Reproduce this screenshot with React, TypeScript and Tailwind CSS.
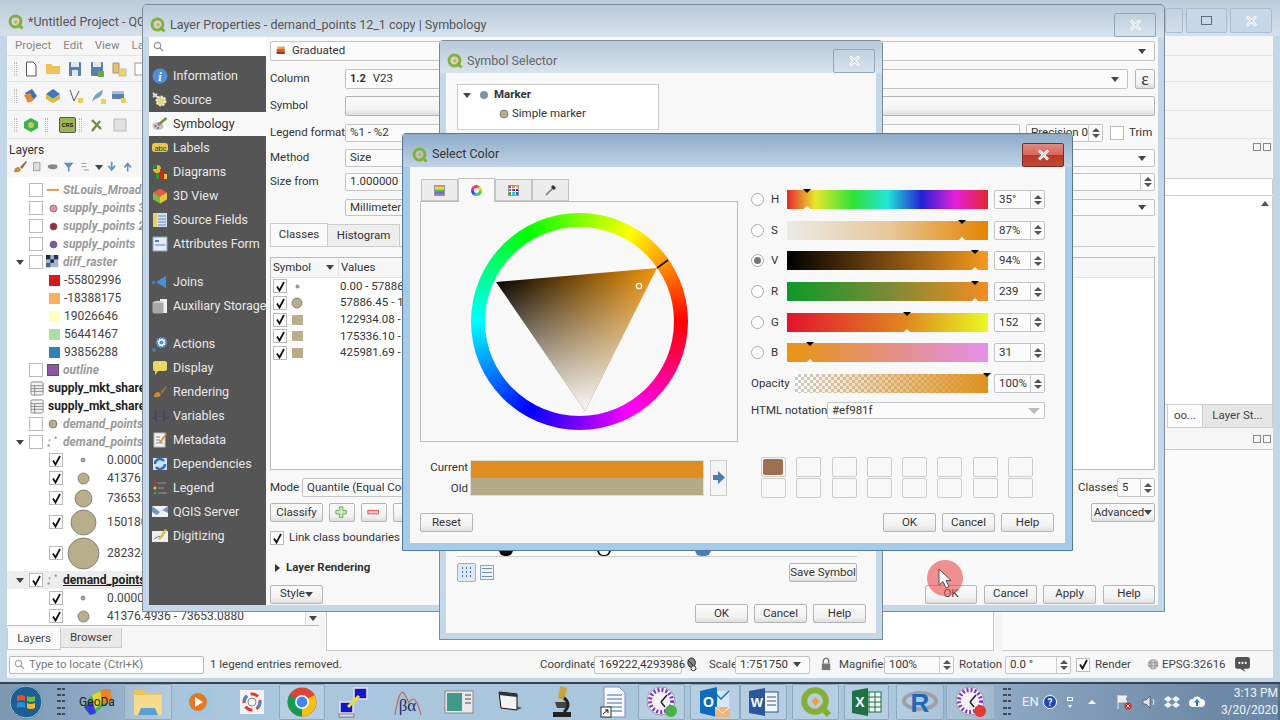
import type { ReactNode } from "react"

type Kids = { children?: ReactNode; className?: string }

const Arrow = ({ className = "" }: { className?: string }) => (
  <span className={`h-0 w-0 shrink-0 border-x-[4px] border-t-[5px] border-x-transparent border-t-[#444] ${className}`} />
)

function Btn({ children, className = "" }: Kids) {
  return (
    <div className={`flex h-[19px] items-center justify-center whitespace-nowrap rounded-[2px] border border-[#b4b4b4] bg-[linear-gradient(#fafafa,#f2f2f2_70%,#dedede)] text-[11.5px] text-[#333] ${className}`}>
      {children}
    </div>
  )
}

function Field({ children, className = "" }: Kids) {
  return (
    <div className={`flex items-center whitespace-nowrap rounded-[2px] border border-[#c4c4c4] bg-[#fbfbfb] pl-1 text-[11.5px] text-[#333] ${className}`}>
      {children}
    </div>
  )
}

function Combo({ children, className = "", faded = false }: Kids & { faded?: boolean }) {
  return (
    <Field className={`justify-between pr-2 ${className}`}>
      <span className="truncate">{children}</span>
      <Arrow className={faded ? "opacity-50" : ""} />
    </Field>
  )
}

function Spin({ children, className = "" }: Kids) {
  return (
    <Field className={`justify-between ${className}`}>
      <span className="truncate">{children}</span>
      <span className="flex h-full w-[14px] shrink-0 flex-col items-center justify-center gap-[2px] border-l border-[#ccc]">
        <span className="h-0 w-0 border-x-[4px] border-b-[4px] border-x-transparent border-b-[#555]" />
        <span className="h-0 w-0 border-x-[4px] border-t-[4px] border-x-transparent border-t-[#555]" />
      </span>
    </Field>
  )
}

function Check({ on = true, className = "" }: { on?: boolean; className?: string }) {
  return (
    <span className={`flex h-[14px] w-[14px] shrink-0 items-center justify-center border border-[#bbb] bg-white ${className}`}>
      {on && (
        <svg width="11" height="11" viewBox="0 0 11 11">
          <path d="M2 5.5 L4.5 9.5 L9 1" fill="none" stroke="#111" strokeWidth="1.8" />
        </svg>
      )}
    </span>
  )
}

const Ico = ({ s = 16, children }: { s?: number; children?: ReactNode }) => (
  <svg width={s} height={s} viewBox="0 0 16 16" className="shrink-0">
    {children}
  </svg>
)

const QLogo = ({ s = 16 }: { s?: number }) => (
  <Ico s={s}>
    <circle cx="7.5" cy="7.5" r="5.4" fill="none" stroke="#84b135" strokeWidth="3" />
    <path d="M10 10 L14.5 14.5" stroke="#84b135" strokeWidth="3" />
    <rect x="6.3" y="6.3" width="3" height="3" fill="#ee9f3e" transform="rotate(45 7.8 7.8)" />
  </Ico>
)

const Brush = () => (
  <Ico>
    <path d="M2 13 Q2 8 7 8 L9 11 Q7 14 2 13Z" fill="#c98b3c" />
    <path d="M8 8 L14 2 L15 3 L10 10Z" fill="#8d6f4b" />
  </Ico>
)

const navIcons: Record<string, ReactNode> = {
  info: (
    <Ico>
      <circle cx="8" cy="8" r="7.5" fill="#4f8fdb" />
      <text x="8" y="12.5" fontSize="12" fontWeight="700" fontStyle="italic" textAnchor="middle" fill="#fff" fontFamily="Liberation Serif, serif">i</text>
    </Ico>
  ),
  source: (
    <Ico>
      <circle cx="9" cy="9" r="4.5" fill="#e9d77e" stroke="#eee" strokeWidth="2" strokeDasharray="2 1.4" />
      <path d="M1 1 L6 6 M1 5 L5 2" stroke="#ddd" strokeWidth="2" />
    </Ico>
  ),
  symb: (
    <Ico>
      <ellipse cx="6" cy="10" rx="5.5" ry="4" fill="#c8c0cc" />
      <circle cx="3.5" cy="10" r="1" fill="#d33" />
      <circle cx="6" cy="12" r="1" fill="#38b" />
      <path d="M6 9 L14.5 2" stroke="#7a8f42" strokeWidth="2.6" />
    </Ico>
  ),
  labels: (
    <Ico>
      <rect x="0" y="3" width="16" height="9" rx="3" fill="#e7c84e" />
      <text x="8.5" y="10.5" fontSize="7.5" textAnchor="middle" fill="#333" fontFamily="Liberation Sans, sans-serif">abc</text>
    </Ico>
  ),
  diagrams: (
    <Ico>
      <circle cx="5" cy="5" r="4" fill="#e9b93a" />
      <path d="M5 5 L5 1 A4 4 0 0 0 1 5Z" fill="#2a7b32" />
      <rect x="4" y="9" width="3" height="6" fill="#2a9b3a" />
      <rect x="8" y="5" width="3" height="10" fill="#c92a2a" />
      <rect x="12" y="10" width="3" height="5" fill="#e8c23a" />
    </Ico>
  ),
  view3d: (
    <Ico>
      <path d="M8 0.5 L15 4.5 L8 8.5 L1 4.5Z" fill="#e8584f" />
      <path d="M1 4.5 L8 8.5 V15.5 L1 11.5Z" fill="#7dbb3c" />
      <path d="M15 4.5 L8 8.5 V15.5 L15 11.5Z" fill="#ecc43b" />
    </Ico>
  ),
  fields: (
    <Ico>
      <rect x="1" y="1" width="4" height="14" fill="#e9cf63" />
      <rect x="5" y="1" width="10" height="14" fill="#cfe0f2" />
      <path d="M6 4 H14 M6 7 H14 M6 10 H14 M6 13 H14" stroke="#6b8fb5" />
    </Ico>
  ),
  form: (
    <Ico>
      <rect x="1" y="1" width="14" height="14" fill="#e4ecf5" stroke="#8aa5c4" />
      <rect x="3" y="4" width="4" height="2" fill="#4f7fb5" />
      <rect x="3" y="8" width="10" height="2" fill="#9ab7d6" />
    </Ico>
  ),
  joins: (
    <Ico>
      <rect x="0" y="7" width="3" height="3" fill="#3f7fc4" />
      <path d="M4 8 L14 2 V14Z" fill="#4b8fd6" />
    </Ico>
  ),
  aux: (
    <Ico>
      <rect x="8" y="1" width="7" height="14" fill="#eee" />
      <ellipse cx="6" cy="5" rx="5.5" ry="2.2" fill="#ccc" />
      <rect x="0.5" y="5" width="11" height="9" fill="#a9a9a9" />
      <ellipse cx="6" cy="14" rx="5.5" ry="1.6" fill="#a9a9a9" />
    </Ico>
  ),
  actions: (
    <Ico>
      <circle cx="9.5" cy="6.5" r="4.6" fill="#fff" stroke="#4f8fdb" strokeWidth="2.4" strokeDasharray="2.2 1" />
      <circle cx="9.5" cy="6.5" r="2" fill="#4f8fdb" />
      <circle cx="2" cy="14" r="2" fill="#5277a8" />
    </Ico>
  ),
  display: (
    <Ico>
      <path d="M1 3 Q1 1 3 1 H13 Q15 1 15 3 V9 Q15 11 13 11 H6 L3 15 V11 Q1 11 1 9Z" fill="#e8d765" />
    </Ico>
  ),
  rendering: <Brush />,
  variables: (
    <Ico>
      <path d="M5 2 Q2 3 4 7 Q5 9 2 10 Q5 11 4 14 M11 2 Q14 3 12 7 Q11 9 14 10 Q11 11 12 14" fill="none" stroke="#4d3f6b" strokeWidth="1.6" />
    </Ico>
  ),
  metadata: (
    <Ico>
      <rect x="2" y="1" width="11" height="14" fill="#f4f4f4" stroke="#bbb" />
      <path d="M4 5 H8 M4 8 H8 M4 11 H11" stroke="#888" />
      <path d="M7 10 L14 1 L15 2 L9 11Z" fill="#e08a3a" />
    </Ico>
  ),
  deps: (
    <Ico>
      <rect x="1" y="2" width="14" height="12" fill="#cfe0f2" />
      <path d="M3 8 A5 5 0 0 1 12 5 M13 8 A5 5 0 0 1 4 11" fill="none" stroke="#2b6fc4" strokeWidth="2.4" />
    </Ico>
  ),
  legend: (
    <Ico>
      <circle cx="3" cy="3" r="1.6" fill="#c33" />
      <circle cx="3" cy="8" r="1.6" fill="#dcb93a" />
      <circle cx="3" cy="13" r="1.6" fill="#3a9b3a" />
      <path d="M6 3 H14 M6 8 H12 M6 13 H15" stroke="#999" />
    </Ico>
  ),
  server: (
    <Ico>
      <rect x="0" y="2" width="16" height="11" fill="#eef2f8" />
      <path d="M0 2 L8 8 L16 2 V9 L10 6 L5 11 L0 8Z" fill="#6e92c4" />
    </Ico>
  ),
  digit: (
    <Ico>
      <rect x="0" y="3" width="16" height="11" fill="#eeeeee" />
      <path d="M2 11 L7 8 L9 10 L14 3" fill="none" stroke="#777" />
      <path d="M6 11 L13 1 L15 2 L8 12Z" fill="#d8c44a" />
    </Ico>
  ),
}

type NavRow = { label: string; icon: string; sel?: boolean; gap?: boolean }
const nav: NavRow[] = [
  { label: "Information", icon: "info" },
  { label: "Source", icon: "source" },
  { label: "Symbology", icon: "symb", sel: true },
  { label: "Labels", icon: "labels" },
  { label: "Diagrams", icon: "diagrams" },
  { label: "3D View", icon: "view3d" },
  { label: "Source Fields", icon: "fields" },
  { label: "Attributes Form", icon: "form" },
  { label: "Joins", icon: "joins", gap: true },
  { label: "Auxiliary Storage", icon: "aux" },
  { label: "Actions", icon: "actions", gap: true },
  { label: "Display", icon: "display" },
  { label: "Rendering", icon: "rendering" },
  { label: "Variables", icon: "variables" },
  { label: "Metadata", icon: "metadata" },
  { label: "Dependencies", icon: "deps" },
  { label: "Legend", icon: "legend" },
  { label: "QGIS Server", icon: "server" },
  { label: "Digitizing", icon: "digit" },
]

const Dot = ({ d, c = "#b9ae8a" }: { d: number; c?: string }) => (
  <svg width={d + 2} height={d + 2} className="shrink-0">
    <circle cx={d / 2 + 1} cy={d / 2 + 1} r={d / 2} fill={c} stroke="#666" strokeWidth="0.7" />
  </svg>
)

const Dots = () => (
  <Ico s={14}>
    <circle cx="3" cy="12" r="1.4" fill="#999" />
    <circle cx="4" cy="6" r="1.1" fill="#999" />
    <circle cx="11" cy="3" r="1.4" fill="#999" />
  </Ico>
)

const Table = () => (
  <Ico s={15}>
    <rect x="1" y="1" width="13" height="14" rx="1.5" fill="#f2f2f2" stroke="#888" />
    <path d="M1 5 H14 M1 8 H14 M1 11 H14 M5 5 V15" stroke="#888" fill="none" />
  </Ico>
)

const Raster = () => (
  <Ico s={14}>
    <rect width="14" height="14" fill="#a7b6cc" />
    <rect width="5" height="5" fill="#1d2b4a" />
    <rect x="9" width="5" height="5" fill="#24365c" />
    <rect x="5" y="5" width="4" height="4" fill="#182442" />
    <rect y="9" width="5" height="5" fill="#4b6284" />
  </Ico>
)

type Tree =
  | { k: "layer"; label: string; sym: ReactNode; open?: boolean; on?: boolean; strong?: boolean; h?: number }
  | { k: "legend"; label: string; c: string }
  | { k: "grad"; label: string; d: number; h: number }
  | { k: "table"; label: string }

const tree: Tree[] = [
  { k: "layer", label: "StLouis_Mroads", sym: <span className="h-[1.5px] w-3 bg-[#e8a14a]" /> },
  { k: "layer", label: "supply_points 3", sym: <Dot d={7} c="#e58fa0" /> },
  { k: "layer", label: "supply_points 2", sym: <Dot d={7} c="#a52a3a" /> },
  { k: "layer", label: "supply_points", sym: <Dot d={7} c="#7d5a9c" /> },
  { k: "layer", label: "diff_raster", sym: <Raster />, open: true },
  { k: "legend", label: "-55802996", c: "#d7191c" },
  { k: "legend", label: "-18388175", c: "#fdae61" },
  { k: "legend", label: "19026646", c: "#ffffbf" },
  { k: "legend", label: "56441467", c: "#abdda4" },
  { k: "legend", label: "93856288", c: "#2b83ba" },
  { k: "layer", label: "outline", sym: <span className="h-3 w-3 border border-[#555] bg-[#8e56a8]" /> },
  { k: "table", label: "supply_mkt_share" },
  { k: "table", label: "supply_mkt_share" },
  { k: "layer", label: "demand_points", sym: <Dot d={8} /> },
  { k: "layer", label: "demand_points", sym: <Dots />, open: true },
  { k: "grad", label: "0.0000 - 41376", d: 4, h: 18 },
  { k: "grad", label: "41376.4936", d: 11, h: 18 },
  { k: "grad", label: "73653.0880", d: 17, h: 22 },
  { k: "grad", label: "150180.3", d: 25, h: 26 },
  { k: "grad", label: "282324.6", d: 31, h: 36 },
  { k: "layer", label: "demand_points", sym: <Dots />, open: true, on: true, strong: true },
  { k: "grad", label: "0.0000 - 41376.4936", d: 4, h: 18 },
  { k: "grad", label: "41376.4936 - 73653.0880", d: 11, h: 18 },
]

function TreeRow({ r }: { r: Tree }) {
  if (r.k === "legend") {
    return (
      <div className="flex h-[18px] items-center pl-[42px]">
        <span className="h-[11px] w-[11px] shrink-0" style={{ background: r.c }} />
        <span className="ml-1 text-[12px] text-[#444]">{r.label}</span>
      </div>
    )
  }
  if (r.k === "grad") {
    return (
      <div className="flex items-center pl-[42px]" style={{ height: r.h }}>
        <Check />
        <span className="flex w-[40px] shrink-0 justify-center">
          <Dot d={r.d} />
        </span>
        <span className="ml-1 whitespace-nowrap text-[12px] text-[#444]">{r.label}</span>
      </div>
    )
  }
  if (r.k === "table") {
    return (
      <div className="flex h-[18px] items-center gap-[3px] pl-[23px]">
        <Table />
        <span className="whitespace-nowrap text-[12px] font-bold text-[#222]">{r.label}</span>
      </div>
    )
  }
  return (
    <div className={`flex h-[18px] items-center pl-1 ${r.strong ? "bg-[#eeeeee]" : ""}`}>
      <span className="flex w-[18px] shrink-0 justify-center">{r.open && <Arrow />}</span>
      <Check on={!!r.on} />
      <span className="flex w-[20px] shrink-0 justify-center">{r.sym}</span>
      <span className={`whitespace-nowrap text-[12px] font-bold ${r.strong ? "text-[#222] underline" : "italic text-[#9a9a9a]"}`}>
        {r.label}
      </span>
    </div>
  )
}

const TB = ({ children, w = "w-[22px]" }: { children?: ReactNode; w?: string }) => (
  <span className={`flex ${w} shrink-0 justify-center`}>{children}</span>
)

const Grip = () => <span className="mx-[3px] h-[14px] w-[3px] shrink-0 border-x border-dotted border-[#bbb]" />

const WinClose = ({ className = "" }: { className?: string }) => (
  <svg width="13" height="12" viewBox="0 0 13 12" className={className}>
    <path d="M2 1.5 L11 10.5 M11 1.5 L2 10.5" stroke="#fff" strokeWidth="3" />
    <path d="M2.5 2 L10.5 10 M10.5 2 L2.5 10" stroke="#8b9aa8" strokeWidth="0.6" />
  </svg>
)

function MainWindow() {
  return (
    <div className="flex h-[682px] flex-col bg-[#c3d6e8] px-[7px] pb-[4px]">
      <div className="-mx-[7px] flex h-[36px] shrink-0 items-center bg-[linear-gradient(#bccbda,#d5e1ec)] pl-[8px] pt-[8px]">
        <QLogo />
        <span className="ml-1 text-[12.5px] text-[#555]">*Untitled Project - QGIS</span>
      </div>
      <div className="flex min-h-0 flex-1 flex-col bg-[#f6f6f6]">
        <div className="flex h-[19px] shrink-0 items-center gap-[12px] pl-2 text-[11.5px] text-[#888]">
          <span>Project</span>
          <span>Edit</span>
          <span>View</span>
          <span>Layer</span>
        </div>
        <div className="flex h-[27px] shrink-0 items-center border-y border-[#e3e3e3] pl-1">
          <Grip />
          <TB>
            <Ico><path d="M3.5 1 H10 L13 4 V15 H3.5Z" fill="#fff" stroke="#555" /></Ico>
          </TB>
          <TB>
            <Ico><path d="M1 13 V3 H6 L8 5 H15 V13Z" fill="#eec25a" /></Ico>
          </TB>
          <TB>
            <Ico><rect x="2" y="1" width="12" height="14" rx="1" fill="#5b80ac" /><rect x="4" y="1" width="8" height="5" fill="#dfe8f2" /><rect x="5" y="9" width="6" height="6" fill="#dfe8f2" /></Ico>
          </TB>
          <TB>
            <Ico><rect x="2" y="1" width="12" height="14" rx="1" fill="#5b80ac" /><rect x="4" y="1" width="8" height="5" fill="#dfe8f2" /><rect x="9" y="10" width="6" height="6" fill="#6fa84a" /></Ico>
          </TB>
          <TB>
            <Ico><path d="M2 2 H8 V12 H2Z" fill="#eec25a" stroke="#a88" /><rect x="8" y="8" width="7" height="7" fill="#eed56a" stroke="#bbb" /></Ico>
          </TB>
          <TB>
            <Ico><rect x="2" y="2" width="12" height="12" fill="#fff" stroke="#999" /></Ico>
          </TB>
        </div>
        <div className="flex h-[29px] shrink-0 items-center border-b border-[#e3e3e3] pl-1">
          <Grip />
          <TB>
            <Ico><path d="M2 5 L9 1 L14 8 L8 14Z" fill="#3f6fb0" /><path d="M1 7 L7 5 L11 12 L5 15Z" fill="#e08a3a" /><rect x="11" y="11" width="5" height="5" fill="#f5f5f5" /></Ico>
          </TB>
          <TB>
            <Ico><path d="M1 6 L8 1 L15 6 L8 11Z" fill="#3f78c4" /><path d="M1 6 V11 L8 15 L15 11 V6 L8 11Z" fill="#ddb83a" /></Ico>
          </TB>
          <TB w="w-[24px]">
            <Ico><path d="M2 2 L6 13 L11 3" fill="none" stroke="#555" /><rect x="10" y="10" width="5" height="5" fill="#e9cf63" /></Ico>
          </TB>
          <TB w="w-[20px]">
            <Ico><path d="M2 14 Q3 6 13 2 Q12 10 5 11Z" fill="#7f9fc4" /><rect x="11" y="11" width="5" height="5" fill="#e9cf63" /></Ico>
          </TB>
          <TB w="w-[22px]">
            <Ico><rect x="1" y="3" width="12" height="8" rx="1" fill="#5b80ac" /><rect x="1" y="3" width="12" height="3" fill="#a8c0dc" /><rect x="10" y="10" width="5" height="5" fill="#e9cf63" /></Ico>
          </TB>
        </div>
        <div className="flex h-[28px] shrink-0 items-center border-b border-[#e3e3e3] pl-1">
          <Grip />
          <TB>
            <Ico><path d="M8 1 L15 5 V11 L8 15 L1 11 V5Z" fill="#38b24a" /><circle cx="8" cy="8" r="3" fill="#c8c36a" /></Ico>
          </TB>
          <Grip />
          <span className="ml-2 flex h-[16px] w-[17px] items-center justify-center rounded-[2px] border border-[#555] bg-[#9ab84e] text-[6px] font-bold text-[#223]">CRS</span>
          <Grip />
          <TB w="w-[24px]">
            <Ico><path d="M3 3 L12 12 M3 14 L11 4" stroke="#6c8f42" strokeWidth="2.4" /></Ico>
          </TB>
          <TB>
            <Ico><rect x="2" y="2" width="12" height="12" fill="#e2e2e2" stroke="#bbb" /></Ico>
          </TB>
        </div>
        <div className="flex min-h-0 flex-1">
          <div className="flex w-[312px] shrink-0 flex-col">
            <div className="flex h-[18px] shrink-0 items-center pl-[2px] pt-[3px] text-[12px] text-[#333]">Layers</div>
            <div className="flex h-[20px] shrink-0 items-center gap-[3px] pl-[5px]">
              <Brush />
              <Ico s={13}><rect x="3" y="2" width="8" height="10" fill="#ddd" stroke="#999" /></Ico>
              <Ico s={13}><ellipse cx="7" cy="7" rx="6" ry="3" fill="#888" /></Ico>
              <Ico s={13}><path d="M1 2 H13 L8 8 V13 H6 V8Z" fill="#5f8fc4" /></Ico>
              <Ico s={13}><path d="M3 3 H9 M3 7 H9 M6 11 H12" stroke="#888" /></Ico>
              <Arrow />
              <Ico s={13}><path d="M7 1 V9 M3 6 L7 11 L11 6" stroke="#5f8fc4" strokeWidth="2" fill="none" /></Ico>
              <Ico s={13}><path d="M7 13 V5 M3 8 L7 3 L11 8" stroke="#5f8fc4" strokeWidth="2" fill="none" /></Ico>
            </div>
            <div className="relative h-[449px] shrink-0 overflow-hidden border-b border-[#bbb] bg-white pt-[4px]">
              {tree.map((r, i) => (
                <TreeRow key={i} r={r} />
              ))}
              <span className="absolute bottom-0 right-0 flex h-[14px] w-[14px] items-center justify-center border-l border-[#ddd] bg-[#f4f4f4]">
                <Arrow />
              </span>
            </div>
            <div className="mt-[2px] flex h-[22px] shrink-0 items-start text-[11.5px] text-[#444]">
              <span className="flex h-[22px] w-[54px] items-center justify-center border-x border-b border-[#ccc] bg-[#fbfbfb]">Layers</span>
              <span className="flex h-[20px] w-[61px] items-center justify-center border-r border-b border-[#ccc] bg-[#e9e9e9]">Browser</span>
            </div>
          </div>
          <div className="ml-[7px] w-[668px] shrink-0 border-x border-b border-[#c8c8c8] bg-white" />
          <div className="ml-[8px] flex flex-1 flex-col text-[11.5px] text-[#444]">
            <div className="flex h-[16px] shrink-0 items-center justify-end gap-[2px] pr-[2px]">
              <span className="h-[8px] w-[8px] border border-[#888]" />
              <span className="h-[8px] w-[8px] border border-[#888]" />
            </div>
            <div className="mt-[23px] h-[18px] shrink-0 rounded-[2px] border border-[#ccc] bg-white" />
            <div className="flex h-[209px] shrink-0 justify-end border-x border-b border-[#ccc] bg-white">
              <span className="flex h-[14px] w-[14px] items-center justify-center">
                <span className="h-0 w-0 border-x-[4px] border-b-[5px] border-x-transparent border-b-[#555]" />
              </span>
            </div>
            <div className="flex h-[24px] shrink-0 items-start justify-end">
              <span className="flex h-[23px] w-[36px] items-center justify-center border-x border-b border-[#ccc] bg-[#fbfbfb]">oo...</span>
              <span className="flex h-[23px] w-[70px] items-center justify-center border-r border-b border-[#ccc] bg-[#e6e6e6]">Layer St...</span>
            </div>
            <div className="flex h-[21px] shrink-0 items-center justify-end gap-[2px] border-b border-[#ccc] pr-[2px]">
              <span className="h-[8px] w-[8px] border border-[#888]" />
              <span className="h-[8px] w-[8px] border border-[#888]" />
            </div>
            <div className="flex-1 border-b border-[#ccc] bg-[#fbfbfb]" />
          </div>
        </div>
        <div className="flex h-[27px] shrink-0 items-center whitespace-nowrap text-[11.5px] text-[#444]">
          <div className="ml-[2px] flex h-[18px] w-[195px] items-center gap-1 rounded-[2px] border border-[#bbb] bg-white pl-1 text-[#777]">
            <svg width="11" height="11" viewBox="0 0 11 11"><circle cx="4.5" cy="4.5" r="3.2" fill="none" stroke="#aaa" strokeWidth="1.2" /><path d="M7 7 L10 10" stroke="#aaa" strokeWidth="1.4" /></svg>
            Type to locate (Ctrl+K)
          </div>
          <span className="ml-[6px] w-[330px] shrink-0">1 legend entries removed.</span>
          <span className="w-[54px] shrink-0">Coordinate</span>
          <Field className="h-[18px] w-[88px] shrink-0">169222,4293986</Field>
          <span className="ml-[3px] w-[24px] shrink-0">
            <Ico s={15}><ellipse cx="7" cy="6" rx="4" ry="5" fill="#888" stroke="#222" /><path d="M3 3 L12 13" stroke="#222" /><circle cx="9" cy="12" r="2.6" fill="#fff" stroke="#222" /></Ico>
          </span>
          <span className="w-[26px] shrink-0">Scale</span>
          <Combo className="h-[18px] w-[75px] shrink-0">1:751750</Combo>
          <span className="ml-[4px] flex w-[25px] shrink-0 justify-center">
            <Ico s={15}><path d="M4.5 7 V4.5 A3 3 0 0 1 10.5 4.5 V7" fill="none" stroke="#777" strokeWidth="1.5" /><rect x="3" y="7" width="9" height="7" fill="#777" /></Ico>
          </span>
          <span className="w-[45px] shrink-0">Magnifier</span>
          <Spin className="h-[18px] w-[70px] shrink-0">100%</Spin>
          <span className="ml-[5px] w-[46px] shrink-0">Rotation</span>
          <Spin className="h-[18px] w-[66px] shrink-0">0.0 °</Spin>
          <Check className="ml-[5px]" />
          <span className="ml-[5px] w-[52px] shrink-0">Render</span>
          <Ico s={14}><circle cx="7" cy="7" r="6" fill="#999" /><path d="M1 7 H13 M7 1 V13 M2.5 3.5 H11.5 M2.5 10.5 H11.5" stroke="#eee" strokeWidth="0.7" /></Ico>
          <span className="ml-[1px] w-[72px] shrink-0">EPSG:32616</span>
          <Ico s={17}><path d="M1 3 Q1 1 3 1 H13 Q15 1 15 3 V10 Q15 12 13 12 H9 L11 15 L6 12 H3 Q1 12 1 10Z" fill="#555" /><circle cx="5" cy="6.5" r="1" fill="#fff" /><circle cx="8" cy="6.5" r="1" fill="#fff" /><circle cx="11" cy="6.5" r="1" fill="#fff" /></Ico>
        </div>
      </div>
    </div>
  )
}

function LayerProps() {
  return (
    <div className="absolute left-[142px] top-[4px] flex h-[608px] w-[1023px] flex-col rounded-t-[5px] border border-[#7d8a97] bg-[#c5d8ea]">
      <div className="flex h-[32px] shrink-0 items-center justify-between rounded-t-[4px] bg-[linear-gradient(#b9c9d9,#d7e3ee)] pl-[7px] pr-[8px] pt-[8px]">
        <span className="flex items-center gap-1 text-[12.5px] text-[#555]">
          <QLogo />
          Layer Properties - demand_points 12_1 copy | Symbology
        </span>
        <span className="flex h-[24px] w-[42px] items-center justify-center rounded-[2px] border border-[#93a5b8]">
          <WinClose />
        </span>
      </div>
      <div className="mx-[6px] mb-[6px] flex min-h-0 flex-1 bg-[#f8f8f8]">
        <div className="flex w-[117px] shrink-0 flex-col">
          <div className="flex h-[19px] shrink-0 items-center bg-white pl-1">
            <svg width="11" height="11" viewBox="0 0 11 11"><circle cx="4.5" cy="4.5" r="3.2" fill="none" stroke="#999" strokeWidth="1.2" /><path d="M7 7 L10 10" stroke="#999" strokeWidth="1.4" /></svg>
          </div>
          <div className="flex flex-1 flex-col bg-[#555555] pt-[8px]">
            {nav.map((n) => (
              <div
                key={n.label}
                className={`flex h-[24px] shrink-0 items-center gap-[5px] whitespace-nowrap pl-[3px] text-[12.5px] ${n.gap ? "mt-[14px]" : ""} ${n.sel ? "-mr-[4px] bg-[#f8f8f8] text-[#333]" : "text-[#e8e8e8]"}`}
              >
                {navIcons[n.icon]}
                {n.label}
              </div>
            ))}
          </div>
        </div>
        <div className="ml-[4px] flex w-[885px] shrink-0 flex-col text-[11.5px] text-[#333]">
          <Field className="mt-[4px] h-[20px] shrink-0 justify-between pr-2">
            <span className="flex items-center gap-1">
              <Ico s={13}><rect x="3" y="2" width="9" height="3" fill="#e8a13a" /><rect x="2" y="5" width="10" height="3" fill="#d4552a" /><rect x="2" y="8" width="10" height="3" fill="#a52020" /></Ico>
              Graduated
            </span>
            <Arrow />
          </Field>
          <div className="mt-[8px] flex h-[20px] shrink-0 items-center">
            <span className="w-[75px] shrink-0">Column</span>
            <Combo className="h-full w-[783px]"><b className="mr-1 text-[11px]">1.2</b> V23</Combo>
            <Btn className="ml-[7px] h-full w-[20px] font-serif text-[18px] text-[#5a3d7a]">ε</Btn>
          </div>
          <div className="mt-[7px] flex h-[20px] shrink-0 items-center">
            <span className="w-[75px] shrink-0">Symbol</span>
            <Btn className="h-full flex-1" />
          </div>
          <div className="mt-[8px] flex h-[18px] shrink-0 items-center">
            <span className="w-[75px] shrink-0 whitespace-nowrap">Legend format</span>
            <Field className="h-full w-[675px]">%1 - %2</Field>
            <Spin className="ml-[6px] h-full w-[77px]">Precision 0</Spin>
            <Check className="ml-[7px]" on={false} />
            <span className="ml-[5px]">Trim</span>
          </div>
          <div className="mt-[7px] flex h-[18px] shrink-0 items-center">
            <span className="w-[75px] shrink-0">Method</span>
            <Combo className="h-full flex-1">Size</Combo>
          </div>
          <div className="mt-[6px] flex h-[18px] shrink-0 items-center">
            <span className="w-[75px] shrink-0">Size from</span>
            <Spin className="h-full flex-1">1.000000</Spin>
          </div>
          <div className="mt-[8px] flex h-[17px] shrink-0 pl-[75px]">
            <Combo className="h-full flex-1">Millimeter</Combo>
          </div>
          <div className="mt-[8px] flex h-[23px] shrink-0 items-end border-b border-[#ccc]">
            <span className="flex h-[23px] w-[58px] items-center justify-center border-x border-t border-[#ccc] bg-[#fafafa]">Classes</span>
            <span className="flex h-[22px] w-[72px] items-center justify-center border-r border-t border-[#ccc] bg-[#eeeeee]">Histogram</span>
          </div>
          <div className="mt-[10px] h-[213px] shrink-0 border border-[#bbb] bg-white">
            <div className="flex h-[20px] items-center border-b border-[#e3e3e3] bg-[#f6f6f6]">
              <span className="flex w-[68px] items-center justify-between border-r border-[#ddd] px-[2px] pr-[4px]">Symbol <Arrow /></span>
              <span className="pl-[2px]">Values</span>
            </div>
            {[
              ["0.00 - 57886.45", 3],
              ["57886.45 - 122934.08", 10],
              ["122934.08 - 175336.10", 0],
              ["175336.10 - 425981.69", 0],
              ["425981.69 - 2051300", 0],
            ].map(([t, d]) => (
              <div key={t as string} className="flex h-[16.7px] items-center">
                <Check className="ml-[2px]" />
                <span className="flex w-[20px] shrink-0 justify-center">
                  {d ? <Dot d={d as number} /> : <span className="h-[10px] w-[11px] bg-[#b9ae8a]" />}
                </span>
                <span className="ml-[33px]">{t}</span>
              </div>
            ))}
          </div>
          <div className="mt-[8px] flex h-[19px] shrink-0 items-center">
            <span className="w-[32px] shrink-0">Mode</span>
            <Combo className="h-full w-[744px]">Quantile (Equal Count)</Combo>
            <span className="ml-[32px] w-[39px] shrink-0 whitespace-nowrap">Classes</span>
            <Spin className="h-full flex-1">5</Spin>
          </div>
          <div className="mt-[6px] flex h-[19px] shrink-0 items-center">
            <Btn className="w-[53px]">Classify</Btn>
            <Btn className="ml-[6px] w-[26px]">
              <Ico s={14}><path d="M5 1 H9 V5 H13 V9 H9 V13 H5 V9 H1 V5 H5Z" fill="#cfe8c4" stroke="#5fa84a" /></Ico>
            </Btn>
            <Btn className="ml-[6px] w-[26px]">
              <Ico s={14}><rect x="1" y="5" width="12" height="4" fill="#f4c8c8" stroke="#d8474a" /></Ico>
            </Btn>
            <Btn className="ml-[6px] w-[70px]">Delete All</Btn>
            <Btn className="ml-auto w-[64px] justify-between px-[4px]">Advanced <Arrow /></Btn>
          </div>
          <div className="mt-[7px] flex h-[18px] shrink-0 items-center gap-[5px]">
            <Check />
            Link class boundaries
          </div>
          <div className="mt-[12px] flex h-[18px] shrink-0 items-center gap-[4px] pl-[5px] font-bold">
            <span className="h-0 w-0 border-y-[4px] border-l-[5px] border-y-transparent border-l-[#333]" />
            <span className="ml-[2px]">Layer Rendering</span>
          </div>
          <div className="mt-[7px] flex h-[20px] shrink-0 items-center">
            <Btn className="w-[53px] justify-between px-[8px]">Style <Arrow /></Btn>
            <Btn className="ml-auto w-[52px]">OK</Btn>
            <Btn className="ml-[7px] w-[53px]">Cancel</Btn>
            <Btn className="ml-[6px] w-[53px]">Apply</Btn>
            <Btn className="ml-[7px] w-[52px]">Help</Btn>
          </div>
        </div>
      </div>
    </div>
  )
}

function SymbolSelector() {
  return (
    <div className="absolute left-[439px] top-[40px] flex h-[600px] w-[444px] flex-col rounded-t-[4px] border border-[#7d8a97] bg-[#c5d8ea]">
      <div className="flex h-[32px] shrink-0 items-center justify-between bg-[linear-gradient(#b9c9d9,#d7e3ee)] pl-[7px] pr-[7px] pt-[8px]">
        <span className="flex items-center gap-1 text-[12.5px] text-[#666]">
          <QLogo />
          Symbol Selector
        </span>
        <span className="flex h-[24px] w-[42px] items-center justify-center rounded-[2px] border border-[#93a5b8]">
          <WinClose />
        </span>
      </div>
      <div className="mx-[6px] mb-[6px] flex min-h-0 flex-1 flex-col bg-[#f8f8f8] px-[11px] text-[11.5px] text-[#333]">
        <div className="mt-[11px] h-[46px] w-[202px] shrink-0 border border-[#ccc] bg-white">
          <div className="flex h-[20px] items-center pl-[5px] font-bold">
            <Arrow />
            <span className="ml-[9px] mr-[6px] h-[8px] w-[8px] rounded-full bg-[#7d93a8]" />
            Marker
          </div>
          <div className="flex h-[18px] items-center pl-[41px]">
            <Dot d={8} />
            <span className="ml-[3px]">Simple marker</span>
          </div>
        </div>
        <div className="mt-[10px] flex h-[417px] w-[400px] shrink-0 items-end justify-between border-b border-[#ccc] bg-white pl-[42px] pr-[146px]">
          <span className="h-[6px] w-[14px] rounded-b-full bg-black" />
          <span className="h-[6px] w-[14px] rounded-b-full border-x-2 border-b border-black" />
          <span className="h-[6px] w-[16px] rounded-b-full bg-[#3f7fc4]" />
        </div>
        <div className="mt-[6px] flex h-[19px] w-[400px] shrink-0 items-center">
          <span className="flex h-[19px] w-[19px] items-center justify-center rounded-[2px] border border-[#aac] bg-[#dfe7f0]">
            <svg width="13" height="13" viewBox="0 0 13 13"><path d="M2 2 H3 M6 2 H7 M10 2 H11 M2 6 H3 M6 6 H7 M10 6 H11 M2 10 H3 M6 10 H7 M10 10 H11" stroke="#4a73a8" strokeWidth="2.2" /></svg>
          </span>
          <span className="ml-[4px] flex h-[15px] w-[14px] flex-col justify-around border border-[#8aa5c4] bg-[#eef3f9] px-[1px]">
            <span className="h-px bg-[#6b8fb5]" />
            <span className="h-px bg-[#6b8fb5]" />
            <span className="h-px bg-[#6b8fb5]" />
          </span>
          <Btn className="ml-auto w-[68px]">Save Symbol</Btn>
        </div>
        <div className="mt-[22px] flex h-[19px] w-[409px] shrink-0 justify-end gap-[6px]">
          <Btn className="w-[53px]">OK</Btn>
          <Btn className="w-[53px]">Cancel</Btn>
          <Btn className="w-[53px]">Help</Btn>
        </div>
      </div>
    </div>
  )
}

function Slider({ label, value, pos, grad, on = false }: { label: string; value: string; pos: number; grad: string; on?: boolean }) {
  return (
    <div className="flex h-[19px] items-center">
      <span className="flex h-[13px] w-[13px] shrink-0 items-center justify-center rounded-full border border-[#aaa] bg-white">
        {on && <span className="h-[7px] w-[7px] rounded-full bg-[#777]" />}
      </span>
      <span className="ml-[7px] w-[16px] shrink-0">{label}</span>
      <div className={`relative h-[19px] w-[201px] shrink-0 ${grad}`}>
        <span className="absolute -top-px h-0 w-0 -translate-x-1/2 border-x-[4px] border-t-[4px] border-x-transparent border-t-black" style={{ left: pos }} />
        <span className="absolute bottom-0 h-0 w-0 -translate-x-1/2 border-x-[3px] border-b-[3px] border-x-transparent border-b-white" style={{ left: pos }} />
      </div>
      <Spin className="ml-[6px] h-[19px] w-[51px] shrink-0">{value}</Spin>
    </div>
  )
}

const sliders = [
  { label: "H", value: "35°", pos: 20, grad: "bg-[linear-gradient(90deg,#e3262e,#e8e82a_14%,#2fe23a_33%,#22e5d8_50%,#2320d6_67%,#e81fd8_84%,#e3262e)]" },
  { label: "S", value: "87%", pos: 175, grad: "bg-[linear-gradient(90deg,#ebeae6,#e8c89c_50%,#e58400)]" },
  { label: "V", value: "94%", pos: 188, grad: "bg-[linear-gradient(90deg,#000,#7a4a10_50%,#f79a1e)]", on: true },
  { label: "R", value: "239", pos: 188, grad: "bg-[linear-gradient(90deg,#0c9a2a,#7a8a35_50%,#f58c22)]" },
  { label: "G", value: "152", pos: 120, grad: "bg-[linear-gradient(90deg,#e3132e,#e08a20_60%,#e9fa20)]" },
  { label: "B", value: "31", pos: 23, grad: "bg-[linear-gradient(90deg,#e89412,#e4907c_50%,#e490ec)]" },
]

function SelectColor() {
  return (
    <div className="absolute left-[402px] top-[133px] flex h-[418px] w-[671px] flex-col rounded-t-[4px] border border-[#5a7690] bg-[#a5cbea]">
      <div className="flex h-[33px] shrink-0 items-center justify-between bg-[linear-gradient(#8facc9,#bfd3e6)] pl-[9px] pr-[8px] pt-[8px]">
        <span className="flex items-center gap-1 text-[12.5px] text-[#333]">
          <QLogo />
          Select Color
        </span>
        <span className="flex h-[24px] w-[42px] items-center justify-center rounded-[2px] border border-[#7a2a20] bg-[linear-gradient(#e08a80,#d8675a_48%,#b93a24_52%,#c04a34)]">
          <WinClose />
        </span>
      </div>
      <div className="mx-[7px] mb-[7px] flex min-h-0 flex-1 flex-col bg-[#f8f8f8] px-[10px] text-[11.5px] text-[#333]">
        <div className="flex h-[275px] shrink-0">
          <div className="flex w-[318px] shrink-0 flex-col pt-[12px]">
            <div className="flex h-[22px] shrink-0 items-end pl-px">
              {["a", "b", "c", "d"].map((t) => (
                <span key={t} className={`flex w-[37px] items-center justify-center border border-[#c4c4c4] ${t === "b" ? "z-10 -mb-px h-[24px] border-b-0 bg-[#f8f8f8]" : "h-[22px] bg-[#ececec]"}`}>
                  {t === "a" && (
                    <span className="h-[11px] w-[11px] border border-[#999] bg-[linear-gradient(#e86,#ee4,#4c4,#66d,#c6d)]" />
                  )}
                  {t === "b" && <span className="h-[11px] w-[11px] rounded-full bg-[conic-gradient(#e33,#ee3,#3c3,#3cc,#33e,#e3e,#e33)] p-[3px]"><span className="block h-full w-full rounded-full bg-white" /></span>}
                  {t === "c" && (
                    <span className="grid h-[11px] w-[11px] grid-cols-3 gap-px border border-[#999] bg-white">
                      <i className="bg-[#c33]" /><i className="bg-[#e83]" /><i className="bg-[#ec3]" />
                      <i className="bg-[#c3a]" /><i className="bg-[#93c]" /><i className="bg-[#33c]" />
                      <i className="bg-[#3a3]" /><i className="bg-[#3cc]" /><i className="bg-[#36c]" />
                    </span>
                  )}
                  {t === "d" && (
                    <svg width="12" height="12" viewBox="0 0 12 12"><path d="M1 11 L8 4" stroke="#777" strokeWidth="1.6" /><path d="M7 2 L10 5" stroke="#333" strokeWidth="3" /></svg>
                  )}
                </span>
              ))}
            </div>
            <div className="flex h-[241px] shrink-0 items-center justify-center border border-[#bbb] bg-[#f8f8f8]">
              <div className="relative flex h-[217px] w-[217px] shrink-0 items-center justify-center rounded-full bg-[conic-gradient(from_90deg,#f00,#f0f,#00f,#0ff,#0f0,#ff0,#f00)]">
                <div className="h-[189px] w-[189px] rounded-full bg-[#f8f8f8]" />
                <svg width="217" height="217" viewBox="0 0 217 217" className="absolute inset-0">
                  <defs>
                    <linearGradient id="hueSide" gradientUnits="userSpaceOnUse" x1="25" y1="69" x2="186" y2="55">
                      <stop offset="0" stopColor="#000" />
                      <stop offset="1" stopColor="#f19409" />
                    </linearGradient>
                    <linearGradient id="whiteSide" gradientUnits="userSpaceOnUse" x1="114" y1="198" x2="105" y2="62">
                      <stop offset="0" stopColor="#f8f8f8" />
                      <stop offset="1" stopColor="#f8f8f8" stopOpacity="0" />
                    </linearGradient>
                  </defs>
                  <path d="M186 55 L25 69 L114 198Z" fill="url(#hueSide)" />
                  <path d="M186 55 L25 69 L114 198Z" fill="url(#whiteSide)" />
                  <path d="M186 55 L197 47" stroke="#111" strokeWidth="1.6" />
                  <circle cx="168" cy="73" r="2.6" fill="none" stroke="#fff" strokeWidth="1.2" />
                </svg>
              </div>
            </div>
          </div>
          <div className="ml-[13px] flex w-[294px] shrink-0 flex-col pt-[23px]">
            <div className="flex flex-col gap-[11.7px]">
              {sliders.map((s) => (
                <Slider key={s.label} {...s} />
              ))}
            </div>
            <div className="mt-[12px] flex h-[19px] items-center">
              <span className="w-[44px] shrink-0">Opacity</span>
              <div className="relative h-[19px] w-[193px] shrink-0 bg-[repeating-conic-gradient(#ccc_0_25%,#fff_0_50%)] bg-[length:6px_6px]">
                <div className="h-full w-full bg-[linear-gradient(90deg,#e0902000,#e09020)]" />
                <span className="absolute -top-px right-[-3px] h-0 w-0 border-x-[4px] border-t-[4px] border-x-transparent border-t-black" />
              </div>
              <Spin className="ml-[6px] h-[19px] w-[51px] shrink-0">100%</Spin>
            </div>
            <div className="mt-[9px] flex h-[17px] items-center">
              <span className="w-[76px] shrink-0 whitespace-nowrap">HTML notation</span>
              <Field className="h-full w-[218px] justify-between pr-[4px]">
                #ef981f
                <span className="h-0 w-0 border-x-[6px] border-t-[6px] border-x-transparent border-t-[#bbb]" />
              </Field>
            </div>
          </div>
        </div>
        <div className="mt-[15px] flex h-[41px] shrink-0">
          <div className="flex w-[49px] shrink-0 flex-col items-end justify-center gap-[6px] pr-[1px] pt-[1px]">
            <span className="leading-[15px]">Current</span>
            <span className="leading-[15px]">Old</span>
          </div>
          <div className="ml-[1px] flex h-[36px] w-[234px] shrink-0 flex-col self-center border border-[#ddd]">
            <div className="flex-1 bg-[#e08e21]" />
            <div className="flex-1 bg-[#b5aa88]" />
          </div>
          <span className="ml-[6px] flex h-[36px] w-[17px] shrink-0 items-center justify-center self-center border border-[#ccc] bg-[#f4f4f4]">
            <svg width="12" height="13" viewBox="0 0 12 13"><path d="M0 4 H5 V0 L12 6.5 L5 13 V9 H0Z" fill="#4d7cb5" /></svg>
          </span>
          <div className="ml-[34px] grid h-[41px] w-[272px] shrink-0 grid-cols-8 gap-x-[10.4px] gap-y-px">
            {Array.from({ length: 16 }, (_, i) => (
              <span key={i} className="flex h-[20px] items-center justify-center rounded-[2px] border border-[#ccc]">
                {i === 0 && <span className="h-[16px] w-[20px] rounded-[2px] bg-[#a06f53]" />}
              </span>
            ))}
          </div>
        </div>
        <div className="mt-[15px] flex h-[19px] shrink-0 items-center">
          <Btn className="w-[53px]">Reset</Btn>
          <Btn className="ml-auto w-[53px] border-[#7fb1d8]">OK</Btn>
          <Btn className="ml-[6px] w-[53px]">Cancel</Btn>
          <Btn className="ml-[6px] mr-[1px] w-[53px]">Help</Btn>
        </div>
      </div>
    </div>
  )
}

const Task = ({ w, on, children }: { w: string; on?: boolean; children?: ReactNode }) => (
  <div className={`flex h-full shrink-0 items-center justify-center ${w} ${on ? "rounded-[2px] border border-[#8ea8c0] bg-[#ffffff26]" : ""}`}>
    {children}
  </div>
)

const TaskGrip = () => (
  <span className="mx-auto grid h-[28px] w-[8px] grid-cols-2 gap-x-px gap-y-[3px]">
    {Array.from({ length: 10 }, (_, i) => (
      <i key={i} className="h-[2px] bg-[#3c4a5a]" />
    ))}
  </span>
)

const Clock = ({ badge }: { badge: string }) => (
  <svg width="32" height="32" viewBox="0 0 32 32">
    <circle cx="15" cy="15" r="14" fill="#f5f3f8" stroke="#999" />
    <circle cx="15" cy="15" r="11" fill="none" stroke="#7a35c8" strokeWidth="4" strokeDasharray="2 2" />
    <path d="M15 16 L21 9 M15 16 L19 21" stroke="#222" strokeWidth="1.6" />
    <circle cx="25" cy="25" r="6" fill={badge} />
  </svg>
)

function Taskbar() {
  return (
    <div className="flex h-[38px] items-stretch border-t-2 border-[#39424c] bg-[linear-gradient(90deg,#7d97b0,#8fabc6_8%,#a9c6dc_14%,#a9c6dc_70%,#8aa4bf_80%,#6d89a6_95%)]">
      <Task w="w-[52px]">
        <svg width="34" height="34" viewBox="0 0 34 34">
          <circle cx="17" cy="17" r="16.5" fill="#1d5f93" />
          <circle cx="17" cy="17" r="16" fill="none" stroke="#a4c6dc" />
          <path d="M8 11 Q12 9 16 11 V16 Q12 14 8 16Z" fill="#e8502a" />
          <path d="M18 11 Q22 13 26 11 V16 Q22 18 18 16Z" fill="#7cb82f" />
          <path d="M8 18 Q12 16 16 18 V23 Q12 21 8 23Z" fill="#2a8fd8" />
          <path d="M18 18 Q22 20 26 18 V23 Q22 25 18 23Z" fill="#f5b922" />
        </svg>
      </Task>
      <Task w="w-[18px]"><TaskGrip /></Task>
      <Task w="w-[54px]">
        <span className="relative flex h-[30px] w-[34px] items-center justify-center">
          <svg width="34" height="30" viewBox="0 0 34 30" className="absolute inset-0">
            <path d="M4 20 Q10 6 22 3 L30 2 L32 14 Q22 18 14 28 Q8 28 4 20Z" fill="#2fb85a" />
            <path d="M18 4 L30 2 L32 14 L22 17Z" fill="#e8832a" />
            <path d="M12 8 L20 4 L23 16 L15 22Z" fill="#e8d22a" />
            <path d="M4 20 L12 14 L16 26 L10 28Z" fill="#3a3ae0" />
          </svg>
          <span className="relative text-[12px] text-[#222]">GeoDa</span>
        </span>
      </Task>
      <Task w="w-[48px]" on>
        <svg width="34" height="30" viewBox="0 0 34 30">
          <path d="M3 3 H13 L15 6 H31 V28 H3Z" fill="#e9c65a" />
          <path d="M3 8 H31 V28 H3Z" fill="#f4dc8c" />
          <path d="M10 21 H24 L27 28 H7Z" fill="#5a9fd6" />
        </svg>
      </Task>
      <Task w="w-[53px]">
        <svg width="26" height="26" viewBox="0 0 26 26">
          <rect x="1" y="2" width="24" height="23" rx="2" fill="#9cc8e4" />
          <circle cx="12" cy="13" r="9" fill="#e8781e" />
          <path d="M9 8 L17 13 L9 18Z" fill="#fff" />
        </svg>
      </Task>
      <Task w="w-[54px]">
        <svg width="24" height="24" viewBox="0 0 24 24">
          <rect width="24" height="24" fill="#f4f4f4" />
          <circle cx="12" cy="12" r="8" fill="none" stroke="#e33" strokeWidth="3" strokeDasharray="8 4" />
          <circle cx="12" cy="12" r="8" fill="none" stroke="#3a8fd8" strokeWidth="3" strokeDasharray="6 20" />
          <circle cx="12" cy="12" r="4" fill="none" stroke="#888" />
        </svg>
      </Task>
      <Task w="w-[46px]" on>
        <svg width="30" height="30" viewBox="0 0 30 30">
          <circle cx="15" cy="15" r="14.5" fill="#db4437" />
          <path d="M15 15 L27.5 8 A14.5 14.5 0 0 1 15 29.5Z" fill="#f4c20d" />
          <path d="M15 15 L15 29.5 A14.5 14.5 0 0 1 2.5 8Z" fill="#0f9d58" />
          <circle cx="15" cy="15" r="7" fill="#fff" />
          <circle cx="15" cy="15" r="5.4" fill="#4285f4" />
        </svg>
      </Task>
      <Task w="w-[55px]">
        <svg width="32" height="32" viewBox="0 0 32 32">
          <rect x="17" y="2" width="13" height="11" fill="#1414c8" stroke="#dde" strokeWidth="1.6" />
          <rect x="3" y="16" width="13" height="11" fill="#1414c8" stroke="#dde" strokeWidth="1.6" />
          <path d="M11 21 L22 10" stroke="#f0e020" strokeWidth="3" />
          <rect x="2" y="28" width="15" height="3" fill="#ddd" stroke="#333" strokeWidth="0.5" />
        </svg>
      </Task>
      <Task w="w-[55px]">
        <span className="relative flex h-[30px] w-[30px] items-center justify-center font-serif text-[17px] leading-none text-[#1b2f66]">
          <span className="mt-[6px]">βα</span>
          <svg width="30" height="30" viewBox="0 0 30 30" className="absolute inset-0"><path d="M2 28 Q6 2 11 6 Q14 12 16 16 Q22 4 28 28" fill="none" stroke="#b86a6a" strokeWidth="1.2" /></svg>
        </span>
      </Task>
      <Task w="w-[48px]">
        <svg width="30" height="28" viewBox="0 0 30 28">
          <rect x="1" y="3" width="28" height="22" fill="#e8e8e8" stroke="#889" />
          <rect x="3" y="5" width="15" height="18" fill="#3f9a8a" />
          <path d="M21 7 H27 M21 11 H27 M21 15 H27" stroke="#999" strokeWidth="2" />
        </svg>
      </Task>
      <Task w="w-[54px]">
        <svg width="26" height="24" viewBox="0 0 26 24">
          <path d="M2 2 L20 4 V20 L4 18Z" fill="#f4f4f4" stroke="#111" />
          <path d="M2 2 L20 4 V7 L2 5Z" fill="#333" />
          <path d="M20 16 L25 18 L20 20Z" fill="#555" />
        </svg>
      </Task>
      <Task w="w-[50px]">
        <svg width="24" height="32" viewBox="0 0 24 32">
          <rect x="9" y="1" width="7" height="12" fill="#c9a23a" transform="rotate(10 12 7)" />
          <path d="M5 16 H19 L17 22 H7Z" fill="#444" />
          <path d="M14 12 Q22 18 14 26" fill="none" stroke="#222" strokeWidth="3" />
          <rect x="3" y="26" width="18" height="5" fill="#222" />
        </svg>
      </Task>
      <Task w="w-[51px]">
        <svg width="26" height="32" viewBox="0 0 26 32">
          <path d="M4 1 H19 L25 7 V31 H4Z" fill="#fafafa" stroke="#7d93b8" />
          <path d="M7 9 H22 M7 13 H22 M7 17 H22 M7 21 H22 M7 25 H22" stroke="#3568b8" />
          <rect x="1" y="21" width="10" height="10" fill="#fff" stroke="#333" />
          <path d="M3 28 L8 24 M5 24 H8 V27" stroke="#111" fill="none" />
        </svg>
      </Task>
      <Task w="w-[47px]" on>
        <Clock badge="#49b04a" />
      </Task>
      <span className="w-[5px] shrink-0" />
      <Task w="w-[50px]" on>
        <svg width="32" height="32" viewBox="0 0 32 32">
          <rect x="14" y="5" width="16" height="16" fill="#d9e8f7" />
          <path d="M14 5 L22 13 L30 5" fill="none" stroke="#1170c4" strokeWidth="1.5" />
          <path d="M1 5 L18 1 V31 L1 27Z" fill="#0f6cbd" />
          <text x="9.5" y="21" fontSize="14" fontWeight="700" fill="#fff" textAnchor="middle" fontFamily="Liberation Sans, sans-serif">O</text>
          <path d="M16 21 H31 V31 H16Z" fill="#f0b47d" />
          <path d="M16 21 L23.5 27 L31 21" fill="none" stroke="#fff" />
        </svg>
      </Task>
      <Task w="w-[47px]" on>
        <svg width="30" height="28" viewBox="0 0 30 28">
          <rect x="12" y="4" width="17" height="20" fill="#f4f6fa" stroke="#2b579a" />
          <path d="M18 9 H27 M18 13 H27 M18 17 H27" stroke="#2b579a" />
          <path d="M0 3 L16 0 V28 L0 25Z" fill="#2b579a" />
          <text x="8" y="19" fontSize="13" fontWeight="700" fill="#fff" textAnchor="middle" fontFamily="Liberation Sans, sans-serif">W</text>
        </svg>
      </Task>
      <span className="w-[5px] shrink-0" />
      <Task w="w-[47px]" on>
        <QLogo s={32} />
      </Task>
      <span className="w-[5px] shrink-0" />
      <Task w="w-[45px]" on>
        <svg width="30" height="28" viewBox="0 0 30 28">
          <rect x="12" y="4" width="17" height="20" fill="#f2f8f3" stroke="#1f7044" />
          <path d="M17 4 V24 M23 4 V24 M12 9 H29 M12 14 H29 M12 19 H29" stroke="#1f7044" />
          <path d="M0 3 L16 0 V28 L0 25Z" fill="#1f7044" />
          <text x="8" y="19" fontSize="14" fontWeight="700" fill="#fff" textAnchor="middle" fontFamily="Liberation Sans, sans-serif">X</text>
        </svg>
      </Task>
      <span className="w-[7px] shrink-0" />
      <Task w="w-[48px]" on>
        <span className="relative flex h-[28px] w-[36px] items-end justify-center">
          <span className="absolute left-0 top-[3px] h-[20px] w-[36px] rounded-[50%] border-[4px] border-[#9ca0a8]" />
          <span className="relative text-[26px] font-bold leading-[26px] text-[#2268b8] [font-family:'Liberation_Sans',sans-serif]">R</span>
        </span>
      </Task>
      <span className="w-[2px] shrink-0" />
      <Task w="w-[49px]" on>
        <Clock badge="#e53935" />
      </Task>
      <Task w="w-[24px]"><TaskGrip /></Task>
      <div className="flex flex-1 items-center text-[#eef3f8]">
        <span className="ml-[3px] w-[21px] text-[13px]">EN</span>
        <span className="flex h-[14px] w-[14px] items-center justify-center rounded-full border border-[#fff] bg-[#1f45b8] text-[10px] font-bold">?</span>
        <span className="ml-[9px] flex w-[7px] flex-col items-center gap-[4px]">
          <i className="h-[4px] w-[6px] border border-white" />
          <i className="h-0 w-0 border-x-[2px] border-t-[3px] border-x-transparent border-t-white" />
        </span>
        <span className="ml-[15px] h-0 w-0 border-x-[4px] border-b-[4px] border-x-transparent border-b-white" />
        <span className="ml-[20px]">
          <Ico s={16}><path d="M2 1 V15 M2 2 H11 L9 5 L11 8 H2" fill="#eee" stroke="#eee" /><circle cx="12" cy="12" r="3.5" fill="#d22" /><path d="M10.5 10.5 L13.5 13.5 M13.5 10.5 L10.5 13.5" stroke="#fff" /></Ico>
        </span>
        <span className="ml-[9px]">
          <Ico s={16}><path d="M2 6 H5 L9 2 V14 L5 10 H2Z" fill="#dfe6ee" stroke="#667" /><path d="M12 5 Q14 8 12 11" fill="none" stroke="#eee" /></Ico>
        </span>
        <span className="ml-[7px]">
          <Ico s={16}><path d="M4 2 L8 5 L4 8 L0 5Z M12 2 L16 5 L12 8 L8 5Z M4 8 L8 11 L4 14 L0 11Z M12 8 L16 11 L12 14 L8 11Z" fill="#f2f5f8" /></Ico>
        </span>
        <span className="ml-[9px]">
          <Ico s={16}><path d="M4 13 A4 4 0 0 1 4 5 A4.5 4.5 0 0 1 12 5 A4 4 0 0 1 12 13Z" fill="#fff" /><path d="M8 5 L11 8.5 H9 V12 H7 V8.5 H5Z" fill="#1a78d8" /></Ico>
        </span>
        <div className="ml-[15px] flex w-[58px] flex-col items-end text-[12px] leading-[17px]">
          <span>3:13 PM</span>
          <span>3/20/2020</span>
        </div>
        <span className="ml-auto h-full w-[9px] bg-[#56708c]" />
      </div>
    </div>
  )
}

const Cursor = () => (
  <div className="absolute left-[927px] top-[560px] z-20 h-[36px] w-[36px] rounded-full bg-[#ea4a4a99]">
    <svg width="16" height="22" viewBox="0 0 16 22" className="absolute left-[11px] top-[8px]">
      <path d="M1 1 V17 L5 13.5 L8 20 L11 18.5 L8 12.5 H13Z" fill="#fff" stroke="#555" strokeWidth="1" />
    </svg>
  </div>
)

export default function App() {
  return (
    <div className="relative h-[720px] w-[1280px] overflow-hidden bg-[#c3d6e8] [font-family:Roboto,'Liberation_Sans',sans-serif]">
      <MainWindow />
      <Taskbar />
      <div className="absolute left-[1165px] top-[8px] flex gap-[3px]">
        <span className="h-[25px] w-[18px] rounded-[2px] border border-[#a9bdd0]" />
        <span className="flex h-[25px] w-[41px] items-center justify-center rounded-[2px] border border-[#a9bdd0] bg-[#c5d7e8]">
          <span className="h-[9px] w-[11px] border border-[#667]" />
        </span>
        <span className="flex h-[25px] w-[42px] items-center justify-center rounded-[2px] border border-[#a9bdd0] bg-[#c5d7e8]">
          <WinClose />
        </span>
      </div>
      <LayerProps />
      <SymbolSelector />
      <SelectColor />
      <Cursor />
    </div>
  )
}
